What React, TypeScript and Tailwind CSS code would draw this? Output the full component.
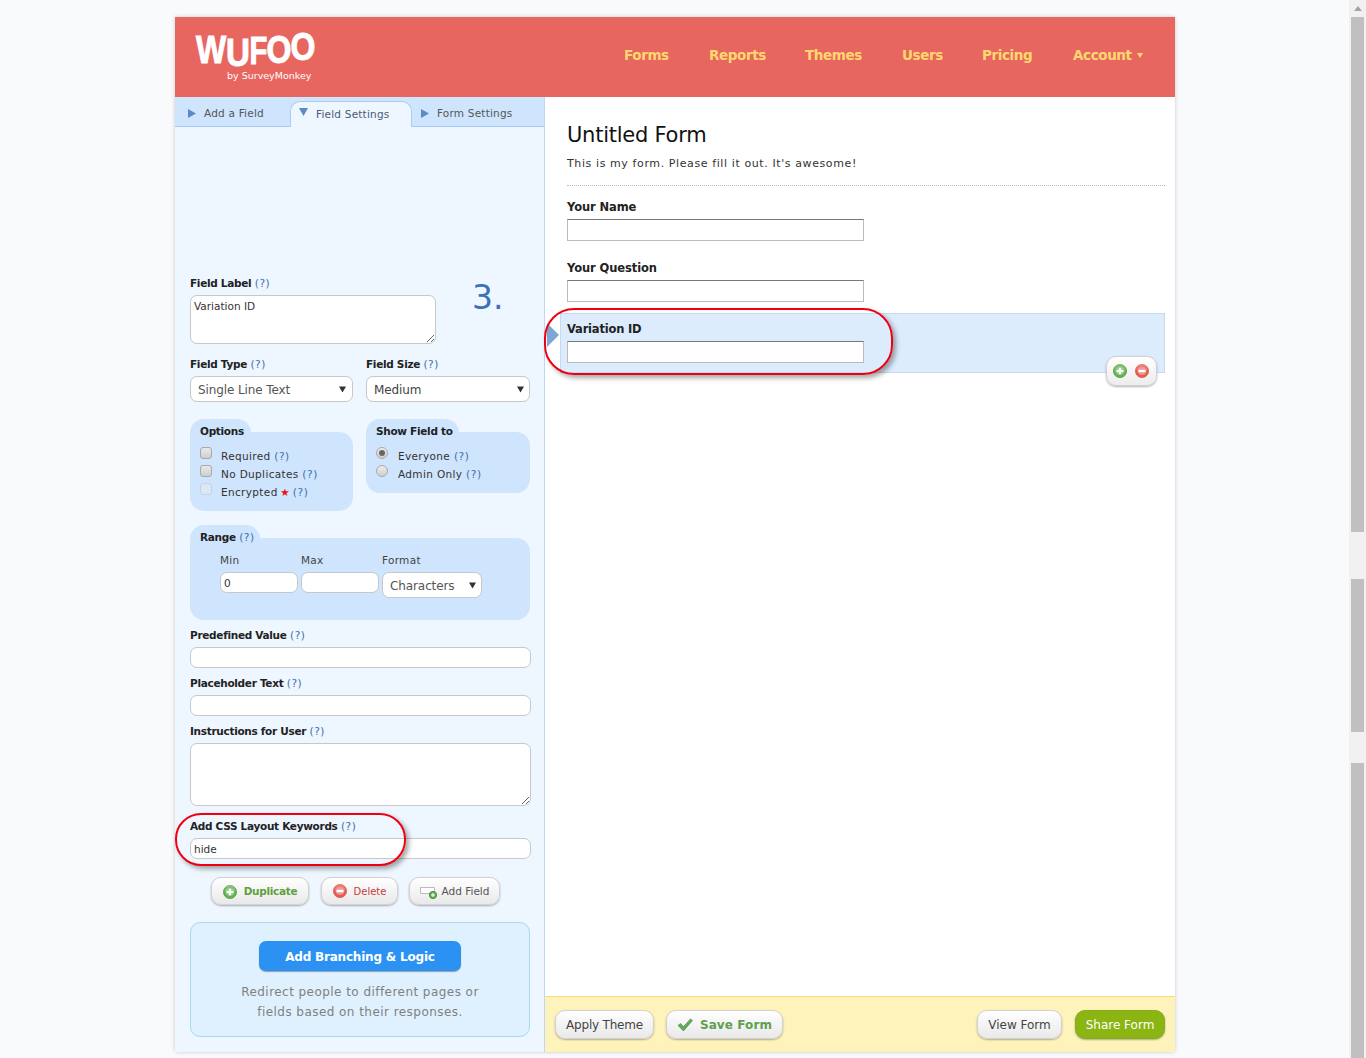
const dejavu = "font-['DejaVu_Sans',sans-serif]";

const Help = ({ className = '' }: { className?: string }) => (
  <span className={`font-normal text-[#3d6ea8] tracking-[0.6px] ${className}`}>(?)</span>
);

const Label = ({ text }: { text: string }) => (
  <div className="h-[14px] leading-[14px] text-[10.5px] font-bold tracking-[-0.3px] text-[#222] whitespace-nowrap">
    {text} <Help />
  </div>
);

const RoundIcon = ({ kind, size = 14 }: { kind: 'plus' | 'minus'; size?: number }) => (
  <svg width={size} height={size} viewBox="0 0 16 16" className="shrink-0">
    <circle cx="8" cy="8" r="7.5" fill={kind === 'plus' ? '#5cb54d' : '#ea5a52'} stroke={kind === 'plus' ? '#6b9e5c' : '#c96a62'} />
    <circle cx="8" cy="6" r="6" fill="#fff" opacity="0.2" />
    <circle cx="8" cy="8" r="4.6" fill="#fff" opacity="0.25" />
    {kind === 'plus' && <path d="M8 4.2v7.6M4.2 8h7.6" stroke="#fff" strokeWidth="2.4" />}
    {kind === 'minus' && <path d="M4 8h8" stroke="#fff" strokeWidth="2.6" />}
  </svg>
);

const Pill = ({ className = '', children }: { className?: string; children: React.ReactNode }) => (
  <div className={`flex items-center justify-center rounded-[10px] border border-[#d2d2d2] bg-gradient-to-b from-white to-[#e9e9e9] shadow-[0_1px_2px_rgba(0,0,0,0.3)] whitespace-nowrap ${className}`}>
    {children}
  </div>
);

const Triangle = ({ className = '' }: { className?: string }) => (
  <svg width="7" height="7" viewBox="0 0 8 8" className={`absolute top-1/2 -translate-y-1/2 ${className}`}>
    <path d="M0 1h8L4 8z" fill="#333" />
  </svg>
);

const Select = ({ value, className, right, color = 'text-[#555]' }: { value: string; className: string; right: string; color?: string }) => (
  <div className={`relative ${className}`}>
    <select
      defaultValue={value}
      className={`appearance-none w-full h-full bg-white rounded-[7px] border border-[#c8c8c8] pl-[7px] pt-[1px] text-[12px] tracking-[-0.1px] ${color} ${dejavu}`}
    >
      <option>{value}</option>
    </select>
    <Triangle className={right} />
  </div>
);

const TextInput = ({ value = '', className = '' }: { value?: string; className?: string }) => (
  <input
    readOnly
    value={value}
    className={`block bg-white rounded-[7px] border border-[#c8c8c8] px-[3px] text-[10.5px] text-[#333] outline-none ${className}`}
  />
);

const Check = ({ light }: { light?: boolean }) => (
  <span className={`block w-[12px] h-[12px] rounded-[3px] border ${light ? 'border-[#c6d3e0] bg-[#dbe7f3]' : 'border-[#a9a9a9] bg-gradient-to-b from-[#e9e9e9] to-[#cfcfcf]'}`} />
);

const Radio = ({ on }: { on?: boolean }) => (
  <span className="flex items-center justify-center w-[12px] h-[12px] rounded-full border border-[#a9a9a9] bg-gradient-to-b from-[#ececec] to-[#cfcfcf]">
    {on && <span className="block w-[6px] h-[6px] rounded-full bg-[#666]" />}
  </span>
);

const GroupTab = ({ children, width }: { children: React.ReactNode; width: string }) => (
  <div className={`relative h-[26px] -mb-[13px] rounded-t-[14px] bg-[#cfe5fd] pl-[10px] pt-[5px] leading-[14px] text-[10.5px] font-bold tracking-[-0.3px] text-[#222] whitespace-nowrap ${width}`}>
    {children}
  </div>
);

const OptionRow = ({ control, wide, children }: { control: React.ReactNode; wide?: boolean; children: React.ReactNode }) => (
  <div className="flex h-[18px]">
    <div className={wide ? 'w-[22px]' : 'w-[21px]'}>{control}</div>
    <div className="pt-[2px] text-[10.5px] leading-[14px] tracking-[0.35px] text-[#333] whitespace-nowrap">{children}</div>
  </div>
);

const TabArrow = ({ down }: { down?: boolean }) => (
  <svg width="9" height="10" viewBox="0 0 9 10" className="shrink-0">
    {down ? <path d="M0 1h9L4.5 9z" fill="#5b8ac4" /> : <path d="M0 0l8 4.5L0 9z" fill="#5b8ac4" />}
  </svg>
);

const Letter = ({ c, className }: { c: string; className: string }) => (
  <span className={`flex justify-center text-white font-bold [-webkit-text-stroke:1px_white] ${className}`}>{c}</span>
);

const navItems = [
  { label: 'Forms', w: 'w-[85px]' },
  { label: 'Reports', w: 'w-[96px]' },
  { label: 'Themes', w: 'w-[97px]' },
  { label: 'Users', w: 'w-[80px]' },
  { label: 'Pricing', w: 'w-[91px]' },
];

const App = () => {
  return (
    <div className={`relative h-[1058px] overflow-hidden bg-[#f9fafc] ${dejavu}`}>
      <div className="flex justify-center w-[1350px] pt-[17px]">
        <div className="relative w-[1000px] h-[1035px] flex flex-col bg-white rounded-b-[3px] shadow-[0_0_4px_rgba(0,0,0,0.2)]">
          {/* 헤더 */}
          <div className="flex h-[80px] shrink-0 bg-[#e76760]">
            <div className="relative w-[449px] shrink-0">
              <div className="absolute left-[21px] top-[13px] flex h-[40px] items-center font-['Liberation_Sans',sans-serif] text-[39px] leading-[30px]">
                <Letter c="W" className="w-[30px] -rotate-[14px] scale-x-[0.82]" />
                <Letter c="U" className="w-[24px] rotate-[3px] scale-x-[0.85] translate-y-[3px]" />
                <Letter c="F" className="w-[17px] -rotate-[4px] scale-x-[0.75] translate-y-[1px]" />
                <Letter c="O" className="w-[24px] scale-x-[0.82]" />
                <Letter c="O" className="w-[24px] scale-x-[0.82] -translate-y-[3px]" />
              </div>
              <div className="absolute left-[52px] top-[52px] text-[9.5px] leading-[14px] text-white whitespace-nowrap">by SurveyMonkey</div>
            </div>
            <div className="flex items-start pt-[29px] text-[13.5px] tracking-[-0.4px] leading-[18px] font-bold text-[#ffd76e] whitespace-nowrap">
              {navItems.map((n) => (
                <div key={n.label} className={n.w}>{n.label}</div>
              ))}
              <div className="flex items-center gap-[5px]">
                Account
                <svg width="6" height="5" viewBox="0 0 6 5"><path d="M0 0h6L3 5z" fill="#ffd76e" /></svg>
              </div>
            </div>
          </div>

          <div className="flex flex-1 min-h-0">
            {/* 왼쪽 패널 */}
            <div className="w-[370px] shrink-0 flex flex-col bg-[#eef6ff] border-r border-[#bcd8f5]">
              {/* 탭 */}
              <div className="flex h-[30px] shrink-0 items-end bg-[#cfe5fd] border-b border-[#a9cdf2] text-[10.5px] tracking-[0.2px] text-[#555]">
                <div className="flex items-center gap-[7px] w-[115px] h-[29px] pl-[13px] pt-[4px]">
                  <TabArrow />
                  <span>Add a Field</span>
                </div>
                <div className="relative -mb-px flex items-center gap-[8px] w-[122px] h-[26px] pl-[8px] rounded-t-[10px] border border-b-0 border-[#a9cdf2] bg-[#eef6ff] text-[#4a5a78]">
                  <span className="-mt-[5px]"><TabArrow down /></span>
                  <span>Field Settings</span>
                </div>
                <div className="flex items-center gap-[7px] h-[29px] pl-[9px] pt-[4px]">
                  <TabArrow />
                  <span>Form Settings</span>
                </div>
              </div>

              {/* 필드 설정 */}
              <div className="flex-1 flex flex-col pl-[15px] pt-[149px]">
                <Label text="Field Label" />
                <textarea
                  readOnly
                  value="Variation ID"
                  className="block mt-[5px] w-[246px] h-[49px] bg-white rounded-[7px] border border-[#c8c8c8] px-[3px] py-[3px] text-[10.5px] leading-[14px] text-[#333] outline-none"
                />
                <div className="mt-[13px] flex gap-[13px]">
                  <div className="w-[163px]">
                    <Label text="Field Type" />
                    <Select value="Single Line Text" className="mt-[5px] w-[163px] h-[26px]" right="right-[7px]" />
                  </div>
                  <div className="w-[164px]">
                    <Label text="Field Size" />
                    <Select value="Medium" className="mt-[5px] w-[164px] h-[26px]" right="right-[6px]" color="text-[#444]" />
                  </div>
                </div>

                <div className="mt-[17px] flex gap-[13px] items-start">
                  <div className="w-[163px]">
                    <GroupTab width="w-[61px]">Options</GroupTab>
                    <div className="h-[79px] rounded-[14px] bg-[#cfe5fd] pl-[10px] pt-[15px]">
                      <OptionRow control={<Check />}>Required <Help /></OptionRow>
                      <OptionRow control={<Check />}>No Duplicates <Help /></OptionRow>
                      <OptionRow control={<Check light />}>Encrypted <span className="text-[#f01010] -mx-[1px]">★</span> <Help /></OptionRow>
                    </div>
                  </div>
                  <div className="w-[164px]">
                    <GroupTab width="w-[93px]">Show Field to</GroupTab>
                    <div className="h-[61px] rounded-[14px] bg-[#cfe5fd] pl-[10px] pt-[15px]">
                      <OptionRow wide control={<Radio on />}>Everyone <Help /></OptionRow>
                      <OptionRow wide control={<Radio />}>Admin Only <Help /></OptionRow>
                    </div>
                  </div>
                </div>

                <div className="mt-[14px] w-[340px]">
                  <GroupTab width="w-[70px]">Range <Help /></GroupTab>
                  <div className="h-[82px] rounded-[14px] bg-[#cfe5fd] pl-[30px] pt-[15px]">
                    <div className="flex text-[10.5px] leading-[14px] tracking-[0.3px] text-[#444]">
                      <div className="w-[81px]">Min</div>
                      <div className="w-[81px]">Max</div>
                      <div>Format</div>
                    </div>
                    <div className="flex items-start mt-[5px]">
                      <TextInput value="0" className="w-[78px] h-[21px] mr-[3px]" />
                      <TextInput className="w-[78px] h-[21px] mr-[3px]" />
                      <Select value="Characters" className="w-[100px] h-[26px]" right="right-[6px]" />
                    </div>
                  </div>
                </div>

                <div className="mt-[8px]"><Label text="Predefined Value" /></div>
                <TextInput className="mt-[5px] w-[341px] h-[21px]" />
                <div className="mt-[8px]"><Label text="Placeholder Text" /></div>
                <TextInput className="mt-[5px] w-[341px] h-[21px]" />
                <div className="mt-[8px]"><Label text="Instructions for User" /></div>
                <textarea readOnly className="block mt-[5px] w-[341px] h-[63px] bg-white rounded-[7px] border border-[#c8c8c8] outline-none" />
                <div className="mt-[13px]"><Label text="Add CSS Layout Keywords" /></div>
                <TextInput value="hide" className="mt-[5px] w-[341px] h-[21px]" />

                <div className="mt-[18px] flex pl-[21px]">
                  <Pill className="w-[98px] h-[28px] gap-[7px] pt-[1px] text-[10.5px] tracking-[-0.3px] font-bold text-[#5f9f3f]"><RoundIcon kind="plus" />Duplicate</Pill>
                  <Pill className="ml-[12px] w-[77px] h-[28px] gap-[7px] text-[10px] text-[#c8403a]"><RoundIcon kind="minus" />Delete</Pill>
                  <Pill className="ml-[11px] w-[91px] h-[28px] gap-[4px] pt-[1px] text-[10.5px] text-[#555]">
                    <svg width="18" height="14" viewBox="0 0 18 14">
                      <path d="M.5 2.5h14v6H.5z" fill="#fff" stroke="#bbb" />
                      <circle cx="13" cy="10" r="3.6" fill="#5cb54d" stroke="#4d8a40" />
                      <path d="M13 8v4M11 10h4" stroke="#fff" />
                    </svg>
                    Add Field
                  </Pill>
                </div>

                <div className="mt-[17px] w-[340px] h-[115px] flex flex-col items-center rounded-[10px] border border-[#a9d8ef] bg-[#dff1fe] pt-[18px]">
                  <div className="flex items-center justify-center w-[202px] h-[30px] pt-[1px] rounded-[7px] bg-[#2b92f4] shadow-[0_1px_1px_rgba(0,0,0,0.35)] text-[12px] tracking-[-0.2px] font-bold text-white">
                    Add Branching &amp; Logic
                  </div>
                  <div className="mt-[11px] text-center text-[12px] leading-[20px] tracking-[0.45px] text-[#808080]">
                    Redirect people to different pages or
                    <br />
                    fields based on their responses.
                  </div>
                </div>
              </div>
            </div>

            {/* 오른쪽 폼 미리보기 */}
            <div className="flex-1 flex flex-col min-w-0">
              <div className="flex-1 flex flex-col pt-[26px]">
                <div className="pl-[22px] pr-[10px]">
                  <div className="text-[21px] leading-[24px] tracking-[-0.25px] text-[#111] whitespace-nowrap">Untitled Form</div>
                  <div className="mt-[10px] pb-[14px] border-b border-dotted border-[#bbb] text-[11px] leading-[14px] tracking-[0.6px] text-[#333]">
                    This is my form. Please fill it out. It's awesome!
                  </div>
                  <div className="mt-[14px] text-[11.5px] leading-[14px] tracking-[-0.1px] font-bold text-[#222]">Your Name</div>
                  <div className="mt-[5px] w-[297px] h-[22px] bg-white border border-[#bbb] border-t-[#777]" />
                  <div className="mt-[20px] text-[11.5px] leading-[14px] tracking-[-0.1px] font-bold text-[#222]">Your Question</div>
                  <div className="mt-[5px] w-[297px] h-[22px] bg-white border border-[#bbb] border-t-[#777]" />
                </div>
                <div className="relative mt-[11px] ml-[15px] mr-[10px] h-[60px] bg-[#dcecfd] border border-[#c5d9f0] pl-[6px] pt-[8px]">
                  <svg width="12" height="24" viewBox="0 0 12 24" className="absolute -left-[14px] top-[9px]">
                    <path d="M0 0l12 12L0 24z" fill="#7ea7d6" />
                  </svg>
                  <div className="text-[11.5px] leading-[14px] tracking-[-0.2px] font-bold text-[#222]">Variation ID</div>
                  <div className="mt-[5px] w-[297px] h-[22px] bg-white border border-[#bbb] border-t-[#777]" />
                  <div className="absolute right-[7px] top-[42px] flex items-center justify-center gap-[8px] w-[51px] h-[30px] pr-[2px] rounded-[10px] border border-[#d2d2d2] bg-gradient-to-b from-white to-[#ececec] shadow-[0_1px_2px_rgba(0,0,0,0.3)]">
                    <RoundIcon kind="plus" />
                    <RoundIcon kind="minus" />
                  </div>
                </div>
              </div>

              {/* 하단 바 */}
              <div className="flex h-[56px] shrink-0 items-start justify-between bg-[#fff3bc] border-t border-[#fadb7c] pt-[13px] pl-[10px] pr-[10px] text-[12px]">
                <div className="flex gap-[12px]">
                  <Pill className="w-[99px] h-[29px] tracking-[-0.2px] text-[#444]">Apply Theme</Pill>
                  <Pill className="w-[117px] h-[29px] gap-[7px] pt-[1px] text-[12px] tracking-[0.1px] font-bold text-[#5f9f4f]">
                    <svg width="16" height="14" viewBox="0 0 16 14"><path d="M1 7.5l2.5-2L6.5 8.5 13.5 1l2 1.5L6.5 13z" fill="#62a85a" stroke="#4f8748" strokeWidth="0.6" /></svg>
                    Save Form
                  </Pill>
                </div>
                <div className="flex gap-[13px]">
                  <Pill className="w-[85px] h-[29px] text-[#444]">View Form</Pill>
                  <Pill className="w-[90px] h-[29px] !border-[#86ad18] !bg-none bg-[#8ab512] text-white">Share Form</Pill>
                </div>
              </div>
            </div>
          </div>

          {/* 주석 표시 */}
          <div className="absolute left-[297px] top-[261px] text-[33px] leading-[40px] tracking-[0px] text-[#3a72b8]">3.</div>
          <div className="absolute left-[369px] top-[291px] w-[349px] h-[67px] rounded-[30px] border-2 border-[#ee0010] shadow-[3px_3px_5px_rgba(0,0,0,0.35)]" />
          <div className="absolute left-[0px] top-[796px] w-[231px] h-[53px] rounded-[26px] border-2 border-[#ee0010] shadow-[3px_3px_5px_rgba(0,0,0,0.35)]" />
        </div>
      </div>

      {/* 스크롤바 */}
      <div className="absolute right-0 top-0 bottom-0 w-[17px] flex flex-col bg-[#f1f1f1] pl-[2px] pr-[2px]">
        <div className="flex h-[17px] shrink-0 items-center justify-center">
          <svg width="8" height="5" viewBox="0 0 8 5"><path d="M4 0l4 5H0z" fill="#a3a3a3" /></svg>
        </div>
        <div className="h-[515px] bg-[#c0c0c0]" />
        <div className="h-[47px]" />
        <div className="h-[153px] bg-[#c0c0c0]" />
        <div className="h-[31px]" />
        <div className="flex-1 bg-[#c0c0c0]" />
      </div>
    </div>
  );
};

export default App;
